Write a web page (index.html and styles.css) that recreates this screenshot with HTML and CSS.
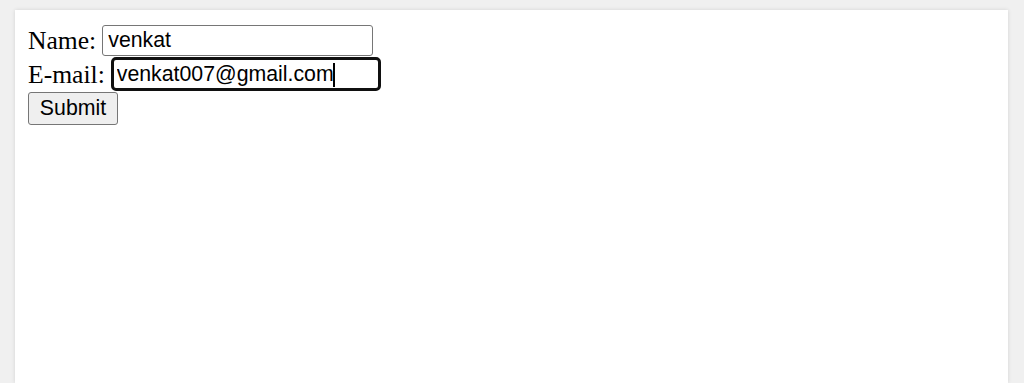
FILE: index.html
```html
<!DOCTYPE html>
<html lang="en">
<head>
    <meta charset="UTF-8">
    <meta name="viewport" content="width=device-width, initial-scale=1.0">
    <title>Form</title>
    <link rel="stylesheet" href="styles.css">
</head>
<body>

<div class="page">
    <form class="form" onsubmit="return false;">
        <div class="row">
            <label for="name">Name:</label>
            <input type="text" id="name" value="venkat">
        </div>
        <div class="row">
            <label for="email">E-mail:</label>
            <span class="caret-wrap">
                <input type="text" id="email" class="focused" value="venkat007@gmail.com">
            </span>
        </div>
        <div class="row">
            <button type="submit">Submit</button>
        </div>
    </form>
</div>

</body>
</html>
```

FILE: styles.css
```css
html, body {
    height: 100%;
}
body {
    margin: 0;
    padding: 10px 16px 0 15px;
    background-color: #f0f0f0;
    font-family: 'Liberation Serif', 'Times New Roman', serif;
    font-size: 25.6px;
    color: #000000;
    overflow: hidden;
    box-sizing: border-box;
}
.page {
    background-color: #ffffff;
    height: 100%;
    padding: 13px;
    box-sizing: border-box;
    box-shadow: 0 0 4px rgba(0, 0, 0, 0.12);
}

/* form rows */
.row {
    display: flex;
    align-items: center;
    gap: 6px;
    height: 34px;
}
.row label {
    line-height: 30px;
    padding-top: 1px;
}
.row input {
    width: 271px;
    height: 31px;
    box-sizing: border-box;
    padding: 0 5px;
    border: 1px solid #767676;
    border-radius: 3px;
    font-family: 'Liberation Sans', Arial, sans-serif;
    font-size: 21.3px;
    color: #000000;
    background-color: #ffffff;
    outline: none;
}
.row input.focused {
    display: block;
    width: 270px;
    height: 34px;
    padding: 0 3px;
    border: 3px solid #101010;
    border-radius: 5px;
}

/* fake text caret, drawn over the focused field */
.caret-wrap {
    position: relative;
    display: block;
}
.caret-wrap::after {
    content: "";
    position: absolute;
    left: 222px;
    top: 6px;
    width: 2px;
    height: 24px;
    background-color: #000000;
}

.row button {
    width: 90px;
    height: 33px;
    padding: 0;
    background-color: #efefef;
    border: 1px solid #767676;
    border-radius: 3px;
    font-family: 'Liberation Sans', Arial, sans-serif;
    font-size: 21.3px;
    color: #000000;
}
```
